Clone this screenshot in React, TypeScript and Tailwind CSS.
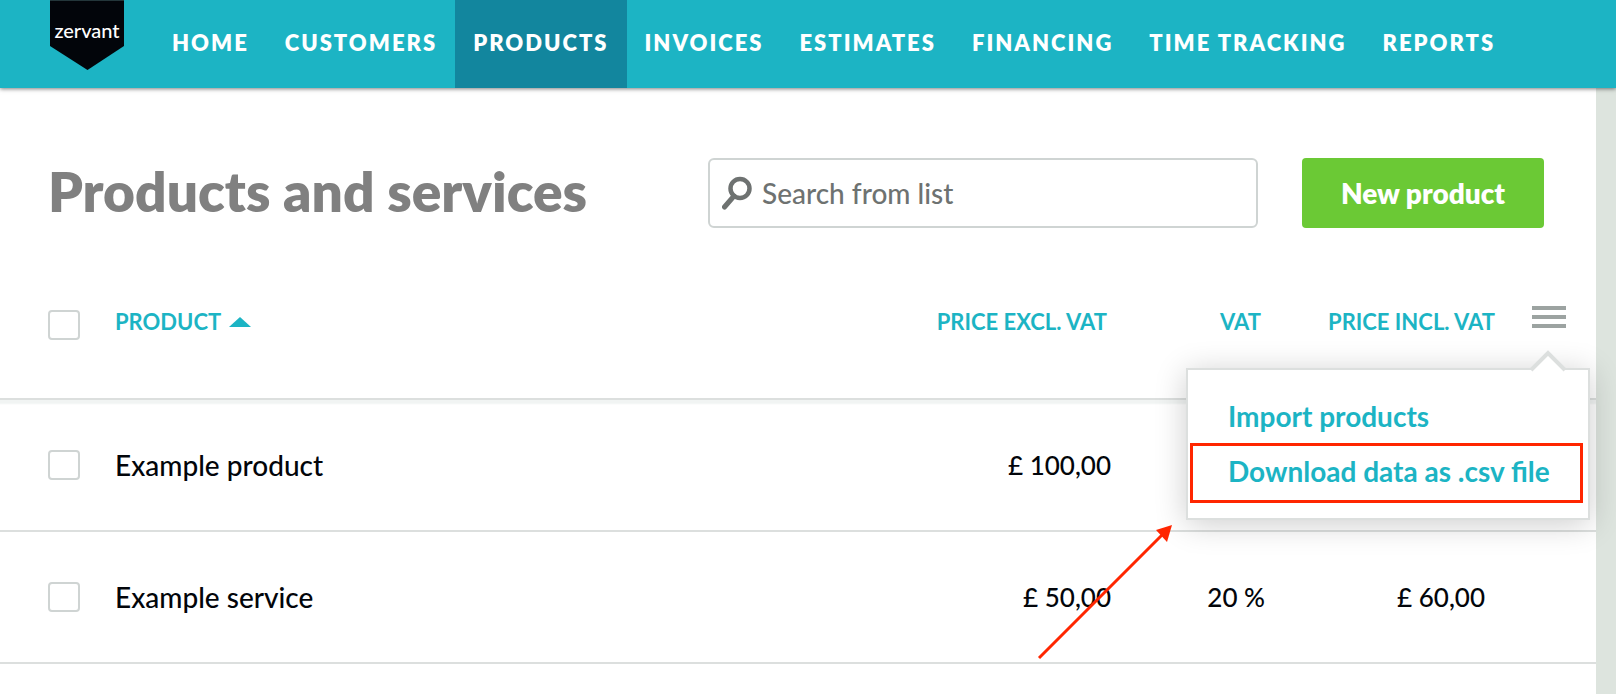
import React from "react"

interface Product {
  id: string
  name: string
  priceExcl: string
  vat?: string
  priceIncl?: string
}

const NAV_ITEMS = [
  'Home',
  'Customers',
  'Products',
  'Invoices',
  'Estimates',
  'Financing',
  'Time tracking',
  'Reports'
]

const PRODUCTS: Product[] = [
  { id: 'p1', name: 'Example product', priceExcl: '£ 100,00' },
  { id: 'p2', name: 'Example service', priceExcl: '£ 50,00', vat: '20 %', priceIncl: '£ 60,00' }
]

const Logo: React.FC = () => (
  <a href="#home" aria-label="Zervant" className="block h-[70px] w-[74px] shrink-0">
    <svg viewBox="0 0 74 70" className="h-full w-full">
      <path d="M0 0h74v46L37.500 70 0 46z" fill="#02050a" />
      <path d="M0 0h74v1H0z" fill="#23363a" />
      <text x="37" y="38" textAnchor="middle" fill="#fff" fontFamily="Lato, sans-serif" fontSize="20" fontWeight="500">
        zervant
      </text>
    </svg>
  </a>
)

const Checkbox: React.FC<{ label: string }> = ({ label }) => (
  <input
    type="checkbox"
    aria-label={label}
    className="block h-[30px] w-8 appearance-none rounded border-2 border-[#cfd4d3] bg-white checked:bg-[#1cb4c4]"
  />
)

const NavBar: React.FC<{ active: string }> = ({ active }) => (
  <header className="relative flex h-[88px] items-start bg-[#1cb4c4] pl-[50px] shadow-[0_1px_4px_rgba(0,0,0,0.5)]">
    <Logo />
    <nav className="ml-[30px] flex">
      {NAV_ITEMS.map((item) => (
        <a
          key={item}
          href={`#${item}`}
          className={
            item === active
              ? 'h-[88px] bg-[#12869e] px-[18px] text-[22px] leading-[86px] font-extrabold tracking-[2px] whitespace-nowrap text-white uppercase'
              : 'h-[88px] px-[18px] text-[22px] leading-[86px] font-extrabold tracking-[2px] whitespace-nowrap text-white uppercase hover:bg-[#12869e]'
          }
        >
          {item}
        </a>
      ))}
    </nav>
  </header>
)

const ListMenu: React.FC = () => (
  <>
    <div className="absolute top-[68px] right-1.5 z-10 w-[404px] border-2 border-[#dcdfde] bg-white pt-5 pb-[15px] text-left text-[28px] shadow-[0_4px_30px_rgba(0,0,0,0.2)]">
      <svg viewBox="0 0 36 22" className="absolute -top-5 right-[22px] h-[22px] w-9">
        <path d="M0 22 18 3l18 19z" fill="#fff" />
        <path d="M1 20 18 3l17 17" fill="none" stroke="#dcdfde" strokeWidth="4" />
      </svg>
      <a href="#import" className="block h-[53px] pl-10 leading-[53px] text-[#1cb4c4]">
        Import products
      </a>
      <a
        href="#download"
        className="mr-[5px] ml-0.5 block h-[60px] border-3 border-[#ff2600] pl-[35px] leading-[50px] whitespace-nowrap text-[#1cb4c4]"
      >
        Download data as .csv file
      </a>
    </div>
    <svg viewBox="0 0 137 137" className="pointer-events-none absolute top-[223px] right-[422px] z-10 size-[137px]">
      <path d="M2 135 127 10" stroke="#ff2600" strokeWidth="3" />
      <path d="M135 2 130 19 119 7z" fill="#ff2600" />
    </svg>
  </>
)

const ProductTable: React.FC<{ products: Product[] }> = ({ products }) => (
  <table className="w-full table-fixed border-collapse">
    <colgroup>
      <col className="w-[115px]" />
      <col />
      <col className="w-[200px]" />
      <col className="w-[154px]" />
      <col className="w-[230px]" />
      <col className="w-[101px]" />
    </colgroup>
    <thead>
      <tr className="h-[99px] border-b-2 border-[#dcdfde] align-top text-[22px] leading-11 whitespace-nowrap text-[#1cb4c4] uppercase">
        <th className="pt-2.5 pl-12">
          <Checkbox label="Select all" />
        </th>
        <th className="text-left">
          <button className="flex items-center gap-2 font-bold uppercase">
            Product
            <svg viewBox="0 0 22 10" className="h-2.5 w-[22px]">
              <path d="M0 10 11 0l11 10z" fill="currentColor" />
            </svg>
          </button>
        </th>
        <th className="pr-1 text-right">Price excl. VAT</th>
        <th className="pr-1 text-right">VAT</th>
        <th className="text-right">Price incl. VAT</th>
        <th className="relative normal-case">
          <button aria-label="List menu" className="mt-1.5 ml-[37px] flex w-[34px] flex-col gap-[5px]">
            <span className="h-1 w-full bg-[#9ca3a1]" />
            <span className="h-1 w-full bg-[#9ca3a1]" />
            <span className="h-1 w-full bg-[#9ca3a1]" />
          </button>
          <ListMenu />
        </th>
      </tr>
    </thead>
    <tbody className="shadow-[inset_0_7px_2px_-2px_#f1f4f3]">
      {products.map((product) => (
        <tr key={product.id} className="h-[132px] border-b-2 border-[#dcdfde] text-[26px] font-medium text-[#02050a]">
          <td className="pl-12">
            <Checkbox label={`Select ${product.name}`} />
          </td>
          <td className="text-[28px]">{product.name}</td>
          <td className="text-right">{product.priceExcl}</td>
          <td className="text-right">{product.vat}</td>
          <td className="pr-2.5 text-right">{product.priceIncl}</td>
          <td />
        </tr>
      ))}
    </tbody>
  </table>
)

export default function App() {
  return (
    <div className="min-h-screen bg-[#dde4de] font-[Lato,sans-serif]">
      <NavBar active="Products" />
      <main className="mr-5 min-h-[calc(100vh-88px)] bg-white">
        <div className="flex items-center pt-[70px] pr-13 pb-[72px] pl-12">
          <h1 className="pb-1 text-[55px] leading-[66px] font-extrabold whitespace-nowrap text-[#808080]">
            Products and services
          </h1>
          <div className="ml-auto flex h-[70px] w-[550px] items-center gap-1.5 rounded-md border-2 border-[#cfd4d3] pl-3">
            <label htmlFor="search" aria-label="Search" className="shrink-0">
              <svg viewBox="0 0 30 34" className="h-[34px] w-[30px]">
                <circle cx="18" cy="12.500" r="9.500" fill="none" stroke="#6e7271" strokeWidth="4.500" />
                <path d="M12 20 2.500 31" stroke="#6e7271" strokeWidth="5" strokeLinecap="round" />
              </svg>
            </label>
            <input
              id="search"
              type="text"
              placeholder="Search from list"
              className="h-full min-w-0 flex-1 px-1 text-[28px] font-medium outline-none placeholder:text-[#6e7271]"
            />
          </div>
          <button className="ml-11 h-[70px] w-[242px] rounded bg-[#6bc935] text-[28px] font-extrabold text-white">
            New product
          </button>
        </div>
        <ProductTable products={PRODUCTS} />
      </main>
    </div>
  )
}
